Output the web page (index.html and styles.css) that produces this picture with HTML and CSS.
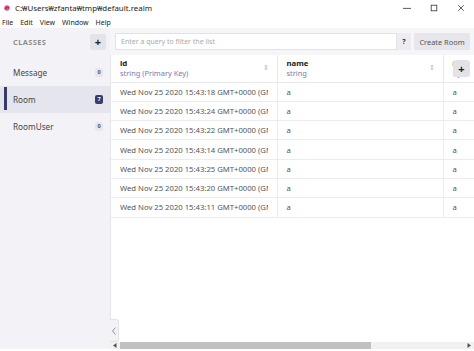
FILE: index.html
```html
<!DOCTYPE html>
<html lang="en">
<head>
    <meta charset="UTF-8">
    <title>C:₩Users₩zfanta₩tmp₩default.realm</title>
    <link rel="stylesheet" href="styles.css">
</head>
<body>
    <header class="titlebar">
        <svg class="app-icon" viewBox="0 0 10 10">
            <circle cx="5" cy="5" r="4.5" fill="#e9507f"/>
            <path d="M1.5 7 Q5 2 8.5 5" stroke="#7b3fa0" stroke-width="2" fill="none"/>
        </svg>
        <span class="title">C:₩Users₩zfanta₩tmp₩default.realm</span>
        <div class="win-controls">
            <span class="win-btn">
                <svg width="10" height="10" viewBox="0 0 10 10"><path d="M0 5.5h10" stroke="#333" stroke-width="1"/></svg>
            </span>
            <span class="win-btn">
                <svg width="10" height="10" viewBox="0 0 10 10"><rect x="1.5" y="1.5" width="7" height="7" stroke="#333" stroke-width="1" fill="none"/></svg>
            </span>
            <span class="win-btn">
                <svg width="10" height="10" viewBox="0 0 10 10"><path d="M1.5 1.5l7 7M8.5 1.5l-7 7" stroke="#333" stroke-width="1"/></svg>
            </span>
        </div>
    </header>

    <nav class="menubar">
        <span>File</span>
        <span>Edit</span>
        <span>View</span>
        <span>Window</span>
        <span>Help</span>
    </nav>

    <main class="app">
        <aside class="sidebar">
            <div class="side-head">
                <span class="side-title">CLASSES</span>
                <button type="button" class="add-btn">+</button>
            </div>
            <ul class="class-list">
                <li class="class-item">Message <span class="badge">0</span></li>
                <li class="class-item active">Room <span class="badge">7</span></li>
                <li class="class-item">RoomUser <span class="badge">0</span></li>
            </ul>
            <button type="button" class="collapse-tab">
                <svg width="6" height="8" viewBox="0 0 6 8"><path d="M4.5 0.5L1.5 4l3 3.5" stroke="#888" stroke-width="0.9" fill="none"/></svg>
            </button>
        </aside>

        <section class="content">
            <div class="toolbar">
                <input class="search" type="text" placeholder="Enter a query to filter the list">
                <button type="button" class="help-btn">?</button>
                <button type="button" class="create-btn">Create Room</button>
            </div>

            <div class="table-wrap">
                <table class="grid">
                    <colgroup>
                        <col class="c1">
                        <col class="c2">
                        <col class="c3">
                    </colgroup>
                    <thead>
                        <tr>
                            <th>
                                <span class="sort">&#8661;</span>
                                <div class="col-name">id</div>
                                <div class="col-type">string (Primary Key)</div>
                            </th>
                            <th>
                                <span class="sort">&#8661;</span>
                                <div class="col-name">name</div>
                                <div class="col-type">string</div>
                            </th>
                            <th>
                                <div class="col-name">(ci</div>
                                <div class="col-type">s j</div>
                            </th>
                        </tr>
                    </thead>
                    <tbody>
                        <tr><td><div class="cell">Wed Nov 25 2020 15:43:18 GMT+0000 (GMT)</div></td><td>a</td><td>a</td></tr>
                        <tr><td><div class="cell">Wed Nov 25 2020 15:43:24 GMT+0000 (GMT)</div></td><td>a</td><td>a</td></tr>
                        <tr><td><div class="cell">Wed Nov 25 2020 15:43:22 GMT+0000 (GMT)</div></td><td>a</td><td>a</td></tr>
                        <tr><td><div class="cell">Wed Nov 25 2020 15:43:14 GMT+0000 (GMT)</div></td><td>a</td><td>a</td></tr>
                        <tr><td><div class="cell">Wed Nov 25 2020 15:43:25 GMT+0000 (GMT)</div></td><td>a</td><td>a</td></tr>
                        <tr><td><div class="cell">Wed Nov 25 2020 15:43:20 GMT+0000 (GMT)</div></td><td>a</td><td>a</td></tr>
                        <tr><td><div class="cell">Wed Nov 25 2020 15:43:11 GMT+0000 (GMT)</div></td><td>a</td><td>a</td></tr>
                    </tbody>
                </table>
                <button type="button" class="add-col">+</button>
            </div>

            <div class="hscroll">
                <span class="arrow">
                    <svg width="4" height="5" viewBox="0 0 4 5"><path d="M3.5 0v5L0 2.5z" fill="#555"/></svg>
                </span>
                <span class="thumb"></span>
                <span class="track"></span>
                <span class="arrow">
                    <svg width="4" height="5" viewBox="0 0 4 5"><path d="M0.5 0v5L4 2.5z" fill="#555"/></svg>
                </span>
            </div>
        </section>
    </main>
</body>
</html>
```

FILE: styles.css
```css
* {
    box-sizing: border-box;
}

body {
    margin: 0;
    width: 474px;
    height: 351px;
    overflow: hidden;
    background: #fff;
    font-family: "Noto Sans", "Liberation Sans", sans-serif;
    color: #333;
}

button {
    font-family: inherit;
    border: none;
    padding: 0;
    cursor: pointer;
}

/* title bar */
.titlebar {
    height: 16px;
    display: flex;
    align-items: center;
}

.app-icon {
    width: 6px;
    height: 6px;
    margin: 0 5px 0 4px;
}

.title {
    font-size: 7.9px;
    color: #222;
}

.win-controls {
    margin-left: auto;
    display: flex;
    height: 16px;
}

.win-btn {
    width: 27px;
    display: flex;
    align-items: center;
    justify-content: center;
}

.win-btn svg {
    width: 8px;
    height: 8px;
}

/* menu */
.menubar {
    height: 12px;
    display: flex;
    align-items: center;
    gap: 7px;
    padding-left: 2px;
    font-size: 7px;
    color: #222;
}

/* layout */
.app {
    display: flex;
    height: 321px;
}

.sidebar {
    position: relative;
    width: 110px;
    flex: none;
    background: #f3f3f7;
}

.side-head {
    height: 27px;
    display: flex;
    align-items: center;
    justify-content: space-between;
    padding: 0 4px 0 13px;
}

.side-title {
    font-size: 7.4px;
    font-weight: bold;
    color: #8c8c8c;
    letter-spacing: 0.4px;
}

.add-btn {
    width: 16px;
    height: 16px;
    background: #e3e3e9;
    border-radius: 2px;
    font-size: 11px;
    font-weight: bold;
    line-height: 16px;
    color: #222;
}

.class-list {
    list-style: none;
    margin: 0;
    padding: 4px 0 0;
}

.class-item {
    position: relative;
    height: 27px;
    display: flex;
    align-items: center;
    padding: 0 7px 0 13px;
    font-size: 8.2px;
    color: #444;
}

.class-item.active {
    background: #e5e5ed;
}

.class-item.active::before {
    content: "";
    position: absolute;
    left: 4px;
    top: 1px;
    bottom: 3px;
    width: 3px;
    background: #39396b;
}

.badge {
    margin-left: auto;
    min-width: 8px;
    height: 9px;
    border-radius: 2px;
    background: #e7e7ed;
    font-size: 5.6px;
    font-weight: bold;
    line-height: 9px;
    text-align: center;
    color: #555;
}

.class-item.active .badge {
    background: #3b3b6d;
    color: #fff;
}

.collapse-tab {
    position: absolute;
    left: 100%;
    bottom: 7px;
    z-index: 2;
    width: 9px;
    height: 23px;
    background: #f3f3f7;
    border: 1px solid #e2e2e8;
    border-left: none;
    border-radius: 0 3px 3px 0;
    display: flex;
    align-items: center;
    justify-content: center;
}

/* content */
.content {
    flex: 1;
    min-width: 0;
    display: flex;
    flex-direction: column;
}

.toolbar {
    height: 27px;
    flex: none;
    display: flex;
    align-items: center;
    padding: 0 4px 0 5px;
    background: #f6f6f9;
}

.search {
    width: 282px;
    height: 17px;
    border: 1px solid #e1e1e7;
    background: #fff;
    padding: 0 5px;
    font-family: inherit;
    font-size: 7px;
    outline: none;
}

.search::placeholder {
    color: #aaa;
}

.help-btn {
    width: 14px;
    height: 17px;
    background: #ececf1;
    font-size: 7px;
    font-weight: bold;
    color: #333;
}

.create-btn {
    margin-left: 3px;
    width: 56px;
    height: 17px;
    background: #e6e6ec;
    font-size: 7.4px;
    color: #555;
}

.table-wrap {
    position: relative;
    flex: 1;
    overflow: hidden;
    border-left: 1px solid #e6e6ea;
}

.grid {
    border-collapse: collapse;
    table-layout: fixed;
    width: 452px;
}

.c1 {
    width: 166px;
}

.c2 {
    width: 166px;
}

.c3 {
    width: 120px;
}

.grid th {
    height: 27px;
    padding: 0 8px 0 9px;
    text-align: left;
    vertical-align: middle;
    border-right: 1px solid #e8e8ec;
    border-bottom: 1px solid #e8e8ec;
}

.col-name {
    font-size: 7.8px;
    font-weight: bold;
    line-height: 10px;
    color: #222;
    white-space: nowrap;
}

.col-type {
    font-size: 7.4px;
    font-weight: normal;
    line-height: 11px;
    color: #7878b4;
    white-space: nowrap;
}

.sort {
    float: right;
    margin-top: 5px;
    font-size: 7px;
    font-weight: normal;
    color: #b5b5b5;
}

.grid td {
    height: 19.3px;
    padding: 0 9px;
    font-size: 7.7px;
    color: #555;
    white-space: nowrap;
    overflow: hidden;
    border-right: 1px solid #ececf0;
    border-bottom: 1px solid #ececf0;
}

.cell {
    overflow: hidden;
}

.add-col {
    position: absolute;
    top: 5px;
    right: 4px;
    width: 17px;
    height: 17px;
    background: #e2e2e8;
    border-radius: 3px;
    font-size: 11px;
    font-weight: bold;
    line-height: 17px;
    color: #222;
}

/* horizontal scrollbar */
.hscroll {
    height: 7px;
    flex: none;
    display: flex;
    background: #f1f1f1;
}

.arrow {
    width: 10px;
    display: flex;
    align-items: center;
    justify-content: center;
}

.thumb {
    width: 251px;
    background: #c1c1c1;
}

.track {
    flex: 1;
}
```
